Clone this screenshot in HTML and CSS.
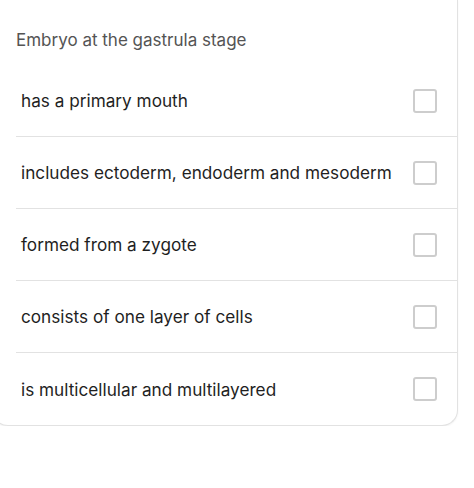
FILE: index.html
```html
<!DOCTYPE html>
<html lang="en">
<head>
    <meta charset="UTF-8">
    <meta name="viewport" content="width=device-width, initial-scale=1.0">
    <title>Question</title>
    <link rel="stylesheet" href="styles.css">
</head>
<body>
    <div class="card">
        <div class="title">Embryo at the gastrula stage</div>
        <ul class="options">
            <li class="option">
                <span class="label">has a primary mouth</span>
                <span class="check"></span>
            </li>
            <li class="option">
                <span class="label">includes ectoderm, endoderm and mesoderm</span>
                <span class="check"></span>
            </li>
            <li class="option">
                <span class="label">formed from a zygote</span>
                <span class="check"></span>
            </li>
            <li class="option">
                <span class="label">consists of one layer of cells</span>
                <span class="check"></span>
            </li>
            <li class="option">
                <span class="label">is multicellular and multilayered</span>
                <span class="check"></span>
            </li>
        </ul>
    </div>
</body>
</html>
```

FILE: styles.css
```css
body {
    margin: 0;
    background: #fff;
    font-family: Inter, "Noto Sans", sans-serif;
}
.card {
    margin-left: -8px;
    width: 466px;
    box-sizing: border-box;
    border: 1px solid #e2e2e2;
    border-top: none;
    border-radius: 0 0 16px 16px;
    box-shadow: 0 1px 2px rgba(0, 0, 0, 0.06);
    background: #fff;
}
.title {
    height: 65px;
    padding: 30px 0 0 23px;
    box-sizing: border-box;
    font-size: 17px;
    color: #545454;
}
.options {
    list-style: none;
    margin: 0;
    padding: 0 0 0 23px;
}
.option {
    height: 72px;
    box-sizing: border-box;
    display: flex;
    align-items: center;
    justify-content: space-between;
    padding: 0 20px 0 5px;
    border-bottom: 1px solid #e2e2e2;
    font-size: 17.2px;
    color: #1f1f1f;
}
.option:last-child {
    border-bottom: none;
}
.check {
    width: 24px;
    height: 24px;
    box-sizing: border-box;
    border: 2px solid #cdcdcd;
    border-radius: 3px;
}
```
